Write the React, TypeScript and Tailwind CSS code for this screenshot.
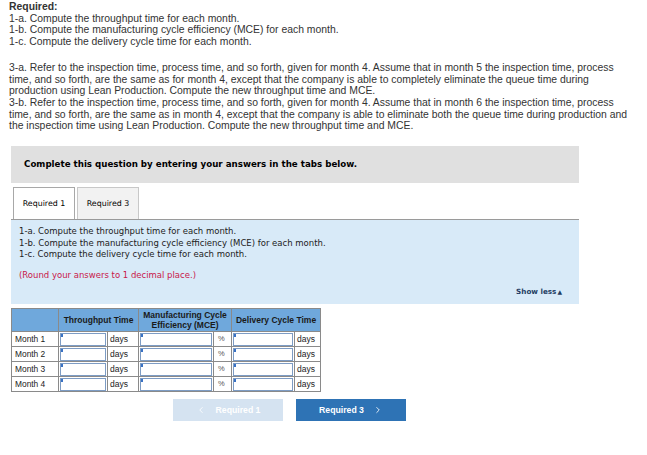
import React from "react";
import { ChevronLeft, ChevronRight } from "lucide-react";

const sans = { fontFamily: '"Liberation Sans", Arial, sans-serif' };
const verdana = { fontFamily: '"DejaVu Sans", Verdana, sans-serif' };

const months = ["Month 1", "Month 2", "Month 3", "Month 4"];

function Field() {
  return (
    <td className="border border-[#8a8a8a] bg-white p-0 px-[1px]">
      <div className="relative h-[13px] w-full border border-[#7d9cc4] bg-white">
        <span className="absolute left-0 top-0 h-[3px] w-[2px] bg-[#3a72c4]" />
      </div>
    </td>
  );
}

function Unit({ text }: { text: string }) {
  return (
    <td className="border border-[#8a8a8a] bg-white pl-[2px] text-[8.5px] text-[#222]">
      {text}
    </td>
  );
}

export default function App() {
  return (
    <div className="w-[647px] h-[455px] bg-white pl-[9px] pt-[1px] text-[#333]">
      <div className="text-[10.4px] leading-[11.7px] whitespace-nowrap" style={sans}>
        <p className="font-bold">Required:</p>
        <p>1-a. Compute the throughput time for each month.</p>
        <p>1-b. Compute the manufacturing cycle efficiency (MCE) for each month.</p>
        <p>1-c. Compute the delivery cycle time for each month.</p>
        <div className="mt-[14px]">
          <p>3-a. Refer to the inspection time, process time, and so forth, given for month 4. Assume that in month 5 the inspection time, process</p>
          <p>time, and so forth, are the same as for month 4, except that the company is able to completely eliminate the queue time during</p>
          <p>production using Lean Production. Compute the new throughput time and MCE.</p>
          <p>3-b. Refer to the inspection time, process time, and so forth, given for month 4. Assume that in month 6 the inspection time, process</p>
          <p>time, and so forth, are the same as in month 4, except that the company is able to eliminate both the queue time during production and</p>
          <p>the inspection time using Lean Production. Compute the new throughput time and MCE.</p>
        </div>
      </div>

      <div className="mt-[14px] ml-[2px] w-[568px]" style={verdana}>
        <div className="h-[37px] bg-[#e0e0e0] pl-[13px] flex items-center text-[8.7px] font-bold text-black">
          Complete this question by entering your answers in the tabs below.
        </div>

        <div className="mt-[4px] flex items-end gap-[2px] pl-[2px] border-b border-[#9a9a9a]">
          <div className="h-[32px] w-[62px] bg-white border border-b-0 border-[#a8a8a8] flex items-center justify-center text-[7.9px] text-black">
            Required 1
          </div>
          <div className="h-[32px] w-[62px] bg-[#f2f2f2] border border-b-0 border-[#c8c8c8] flex items-center justify-center text-[7.9px] text-black">
            Required 3
          </div>
        </div>

        <div className="relative h-[84px] bg-[#d8eaf8] pl-[8px] pt-[6px] text-[8.5px] leading-[11.5px] text-[#222] whitespace-nowrap">
          <p>1-a. Compute the throughput time for each month.</p>
          <p>1-b. Compute the manufacturing cycle efficiency (MCE) for each month.</p>
          <p>1-c. Compute the delivery cycle time for each month.</p>
          <p className="mt-[9.5px] text-[#c8174a]">(Round your answers to 1 decimal place.)</p>
          <div className="absolute right-[17px] top-[66px] flex items-center text-[7.2px] font-bold text-[#1f3d63]">
            Show less<span className="ml-[1px] text-[6px]">▲</span>
          </div>
        </div>
      </div>

      <table className="mt-[4px] ml-[2px] w-[309px] table-fixed border-collapse border border-[#7a7a7a]" style={sans}>
        <colgroup>
          <col className="w-[47px]" />
          <col className="w-[49px]" />
          <col className="w-[31px]" />
          <col className="w-[75px]" />
          <col className="w-[18px]" />
          <col className="w-[63px]" />
          <col className="w-[26px]" />
        </colgroup>
        <thead>
          <tr className="h-[23px] bg-[#6fa8dc] text-[8.5px] leading-[10px] text-[#1a1a1a]">
            <th className="border border-[#8a8a8a]" />
            <th colSpan={2} className="border border-[#8a8a8a] font-bold">Throughput Time</th>
            <th colSpan={2} className="border border-[#8a8a8a] font-bold">
              Manufacturing Cycle
              <br />
              Efficiency (MCE)
            </th>
            <th colSpan={2} className="border border-[#8a8a8a] font-bold">Delivery Cycle Time</th>
          </tr>
        </thead>
        <tbody>
          {months.map((m) => (
            <tr key={m} className="h-[15px]">
              <td className="border border-[#8a8a8a] bg-white pl-[3px] text-[8.4px] text-[#222]">{m}</td>
              <Field />
              <Unit text="days" />
              <Field />
              <td className="border border-[#8a8a8a] bg-white pl-[4px] text-[7.5px] text-[#555]">%</td>
              <Field />
              <Unit text="days" />
            </tr>
          ))}
        </tbody>
      </table>

      <div className="mt-[7px] ml-[164px] flex gap-[13px]" style={sans}>
        <div className="h-[22px] w-[110px] bg-[#d5e3f1] text-white text-[8.7px] font-bold flex items-center justify-center">
          <ChevronLeft size={10} strokeWidth={2} className="mr-[10px]" />
          Required 1
        </div>
        <div className="h-[22px] w-[110px] bg-[#2e73b5] text-white text-[8.7px] font-bold flex items-center justify-center">
          Required 3
          <ChevronRight size={10} strokeWidth={2} className="ml-[9px]" />
        </div>
      </div>
    </div>
  );
}
